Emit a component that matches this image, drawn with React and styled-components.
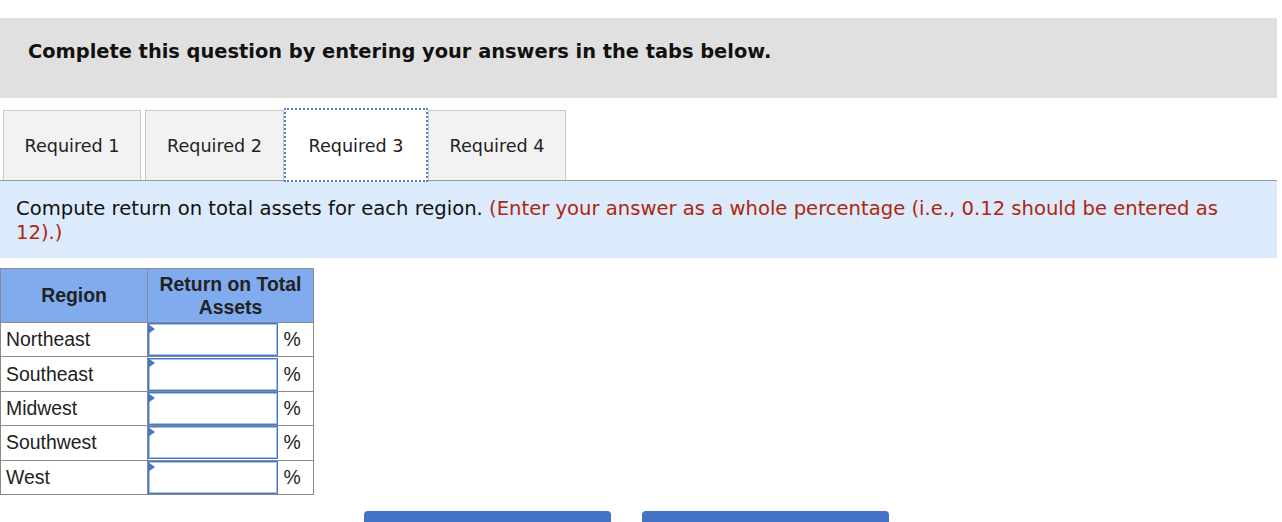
import React from "react";
import styled, { createGlobalStyle } from "styled-components";

const Global = createGlobalStyle`
  body {
    margin: 0;
    background: #fff;
    font-family: "DejaVu Sans", Verdana, sans-serif;
    overflow: hidden;
  }
`;

const Page = styled.div`
  width: 1277px;
  padding-top: 18px;
`;

const Banner = styled.div`
  box-sizing: border-box;
  background: #e0e0e0;
  height: 80px;
  padding: 21px 0 0 28px;
  font-size: 19.4px;
  line-height: 26px;
  font-weight: 700;
  color: #111;
`;

const TabStrip = styled.div`
  display: flex;
  margin-top: 12px;
  padding-left: 3px;
  height: 70px;
  border-bottom: 1px solid #9a9a9a;
  align-items: flex-end;
`;

const Tab = styled.div`
  box-sizing: border-box;
  width: ${(p) => p.w}px;
  margin-right: ${(p) => p.gap}px;
  height: ${(p) => (p.active ? 74 : 70)}px;
  display: flex;
  align-items: center;
  justify-content: center;
  padding-top: ${(p) => (p.active ? 2 : 0)}px;
  font-size: 17.6px;
  color: #222;
  background: ${(p) => (p.active ? "#fff" : "#f2f2f2")};
  border: ${(p) => (p.active ? "2px dotted #4f7fd0" : "1px solid #c9c9c9")};
  border-bottom: ${(p) => (p.active ? "2px dotted #4f7fd0" : "none")};
  margin-bottom: ${(p) => (p.active ? "-2px" : "0")};
  position: relative;
  z-index: ${(p) => (p.active ? 1 : 0)};
`;

const Prompt = styled.div`
  background: #dcebfb;
  padding: 16px 40px 14px 16px;
  font-size: 19.6px;
  line-height: 23.5px;
  color: #111;
`;

const Hint = styled.span`
  color: #b0260c;
`;

const Grid = styled.table`
  margin-top: 10px;
  border-collapse: collapse;
  font-family: "Liberation Sans", Arial, sans-serif;
  font-size: 19.4px;
  color: #222;
`;

const Head = styled.th`
  background: #80abee;
  border: 1px solid #8a8a8a;
  font-weight: 700;
  line-height: 23px;
  height: 53px;
  padding: 0;
  width: ${(p) => p.w}px;
`;

const Cell = styled.td`
  border: 1px solid #8a8a8a;
  height: 33.4px;
  padding: 0 0 0 5px;
  text-align: left;
`;

const InputCell = styled.td`
  border: 1px solid #8a8a8a;
  border-right: none;
  padding: 0;
  width: 131px;
  height: 33.4px;
  position: relative;
`;

const Field = styled.div`
  box-sizing: border-box;
  width: 130px;
  height: 33px;
  border: 1px solid #4677c6;
  box-shadow: inset 0 0 0 1px #a8c2ee;
  background: #fff;
`;

const Flag = styled.span`
  position: absolute;
  left: 0;
  top: 1px;
  width: 0;
  height: 0;
  border-top: 5px solid transparent;
  border-bottom: 5px solid transparent;
  border-left: 7px solid #4677c6;
`;

const Unit = styled.td`
  border: 1px solid #8a8a8a;
  border-left: none;
  width: 34px;
  padding: 0 0 0 4px;
  box-sizing: border-box;
`;

const Actions = styled.div`
  display: flex;
  gap: 31px;
  margin-top: 16px;
  padding-left: 364px;
`;

const ActionButton = styled.div`
  width: 247px;
  height: 12px;
  background: #4472c4;
  border-radius: 4px 4px 0 0;
`;

const tabs = [
  { label: "Required 1", w: 138, gap: 4 },
  { label: "Required 2", w: 139, gap: 0 },
  { label: "Required 3", w: 144, gap: 0, active: true },
  { label: "Required 4", w: 138, gap: 0 },
];

const regions = ["Northeast", "Southeast", "Midwest", "Southwest", "West"];

export default function App() {
  return (
    <Page>
      <Global />
      <Banner>Complete this question by entering your answers in the tabs below.</Banner>
      <TabStrip>
        {tabs.map((t) => (
          <Tab key={t.label} w={t.w} gap={t.gap} active={t.active}>
            {t.label}
          </Tab>
        ))}
      </TabStrip>
      <Prompt>
        Compute return on total assets for each region.{" "}
        <Hint>
          (Enter your answer as a whole percentage (i.e., 0.12 should be entered as 12).)
        </Hint>
      </Prompt>
      <Grid>
        <thead>
          <tr>
            <Head w={146}>Region</Head>
            <Head w={165} colSpan={2}>
              Return on Total
              <br />
              Assets
            </Head>
          </tr>
        </thead>
        <tbody>
          {regions.map((r) => (
            <tr key={r}>
              <Cell>{r}</Cell>
              <InputCell>
                <Field />
                <Flag />
              </InputCell>
              <Unit>%</Unit>
            </tr>
          ))}
        </tbody>
      </Grid>
      <Actions>
        <ActionButton />
        <ActionButton />
      </Actions>
    </Page>
  );
}
